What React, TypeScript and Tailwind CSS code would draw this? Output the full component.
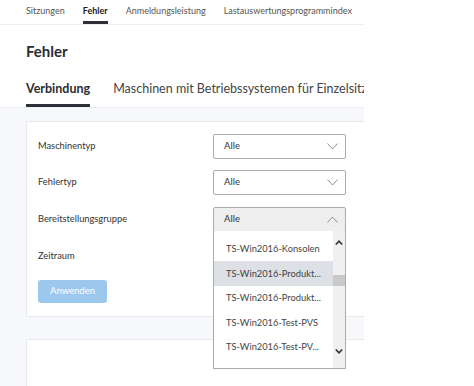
import React from 'react';

const font = { fontFamily: 'Lato, "Open Sans", sans-serif' };

const Chevron: React.FC<{ up?: boolean }> = ({ up }) => (
  <svg width="11" height="7" viewBox="0 0 11 7" className="shrink-0">
    <path
      d={up ? 'M0.5 6.5 L5.5 1 L10.5 6.5' : 'M0.5 0.5 L5.5 6 L10.5 0.5'}
      fill="none"
      stroke="#8a8f96"
      strokeWidth="1"
    />
  </svg>
);

const ScrollArrow: React.FC<{ up?: boolean }> = ({ up }) => (
  <svg width="8" height="5" viewBox="0 0 8 5">
    <path
      d={up ? 'M0.8 4.5 L4 1.2 L7.2 4.5' : 'M0.8 0.5 L4 3.8 L7.2 0.5'}
      fill="none"
      stroke="#333"
      strokeWidth="1.6"
    />
  </svg>
);

const Select: React.FC<{ open?: boolean }> = ({ open }) => (
  <div
    className={`w-[133px] h-[25px] border border-[#a9adb3] rounded-[2px] flex items-center justify-between pl-[10px] pr-[7px] text-[9.5px] text-[#333] ${
      open ? 'bg-[#eeeeee]' : 'bg-white'
    }`}
  >
    <span>Alle</span>
    <Chevron up={open} />
  </div>
);

const groups = [
  'TS-Win2016-Konsolen',
  'TS-Win2016-Produkt...',
  'TS-Win2016-Produkt...',
  'TS-Win2016-Test-PVS',
  'TS-Win2016-Test-PV...',
  'V7012 - U6565 Heck...',
];

const DropdownList: React.FC = () => (
  <div className="absolute left-0 top-[24px] w-[133px] h-[138px] bg-white border border-[#a9adb3] border-t-0 overflow-hidden flex">
    <div className="flex-1 pt-[6px]">
      {groups.map((g, i) => (
        <div
          key={i}
          className={`h-[24.5px] flex items-center pl-[12px] text-[9.3px] text-[#444] whitespace-nowrap ${
            i === 1 ? 'bg-[#dde0e5]' : ''
          }`}
        >
          {g}
        </div>
      ))}
    </div>
    <div className="w-[12px] bg-[#f0f0f0] flex flex-col items-center">
      <div className="h-[24px] flex items-center">
        <ScrollArrow up />
      </div>
      <div className="w-full h-[11px] mt-[20px] bg-[#c9c9c9]" />
      <div className="mt-auto mb-[14px]">
        <ScrollArrow />
      </div>
    </div>
  </div>
);

const Row: React.FC<{ label: string; children?: React.ReactNode }> = ({ label, children }) => (
  <div className="flex items-center h-[25px] shrink-0">
    <div className="w-[175px] text-[9.3px] text-[#333]">{label}</div>
    {children}
  </div>
);

export default function App() {
  return (
    <div className="w-[474px] h-[386px] bg-white overflow-hidden" style={font}>
      <div className="w-[364px] h-full flex flex-col overflow-hidden">
        <nav className="h-[25px] shrink-0 border-b border-[#eceef2] flex items-end gap-[18px] pl-[26px] text-[9px] text-[#555] whitespace-nowrap overflow-hidden">
          <span className="pb-[7px]">Sitzungen</span>
          <span className="pb-[4px] border-b-[3px] border-[#2d3038] font-bold text-[#222]">Fehler</span>
          <span className="pb-[7px]">Anmeldungsleistung</span>
          <span className="pb-[7px]">Lastauswertungsprogrammindex</span>
        </nav>

        <h1 className="shrink-0 pl-[26px] pt-[15px] text-[15px] font-bold text-[#2a2d33] leading-[22px]">Fehler</h1>

        <div className="shrink-0 mt-[18px] pl-[26px] flex gap-[23px] text-[12.5px] whitespace-nowrap border-b border-[#eceef2] overflow-hidden">
          <span className="pb-[5px] border-b-[3px] border-[#2d3038] font-bold text-[#2a2d33]">Verbindung</span>
          <span className="text-[#444]">Maschinen mit Betriebssystemen für Einzelsitzungen</span>
        </div>

        <div className="flex-1 min-h-0 bg-[#f7f8fb] pl-[26px] pt-[13px]">
          <div className="bg-white border border-r-0 border-[#e6e8ec] pl-[11px] pt-[12px] pb-[13px] flex flex-col">
            <Row label="Maschinentyp">
              <Select />
            </Row>
            <div className="h-[11px]" />
            <Row label="Fehlertyp">
              <Select />
            </Row>
            <div className="h-[12px]" />
            <Row label="Bereitstellungsgruppe">
              <div className="relative z-10">
                <Select open />
                <DropdownList />
              </div>
            </Row>
            <div className="h-[12px]" />
            <Row label="Zeitraum" />
            <div className="h-[11px]" />
            <button className="w-[69px] h-[23px] rounded-[3px] bg-[#9dc8ee] text-white text-[9.5px]">
              Anwenden
            </button>
          </div>
          <div className="mt-[22px] h-[60px] bg-white border border-r-0 border-[#e6e8ec]" />
        </div>
      </div>
    </div>
  );
}
